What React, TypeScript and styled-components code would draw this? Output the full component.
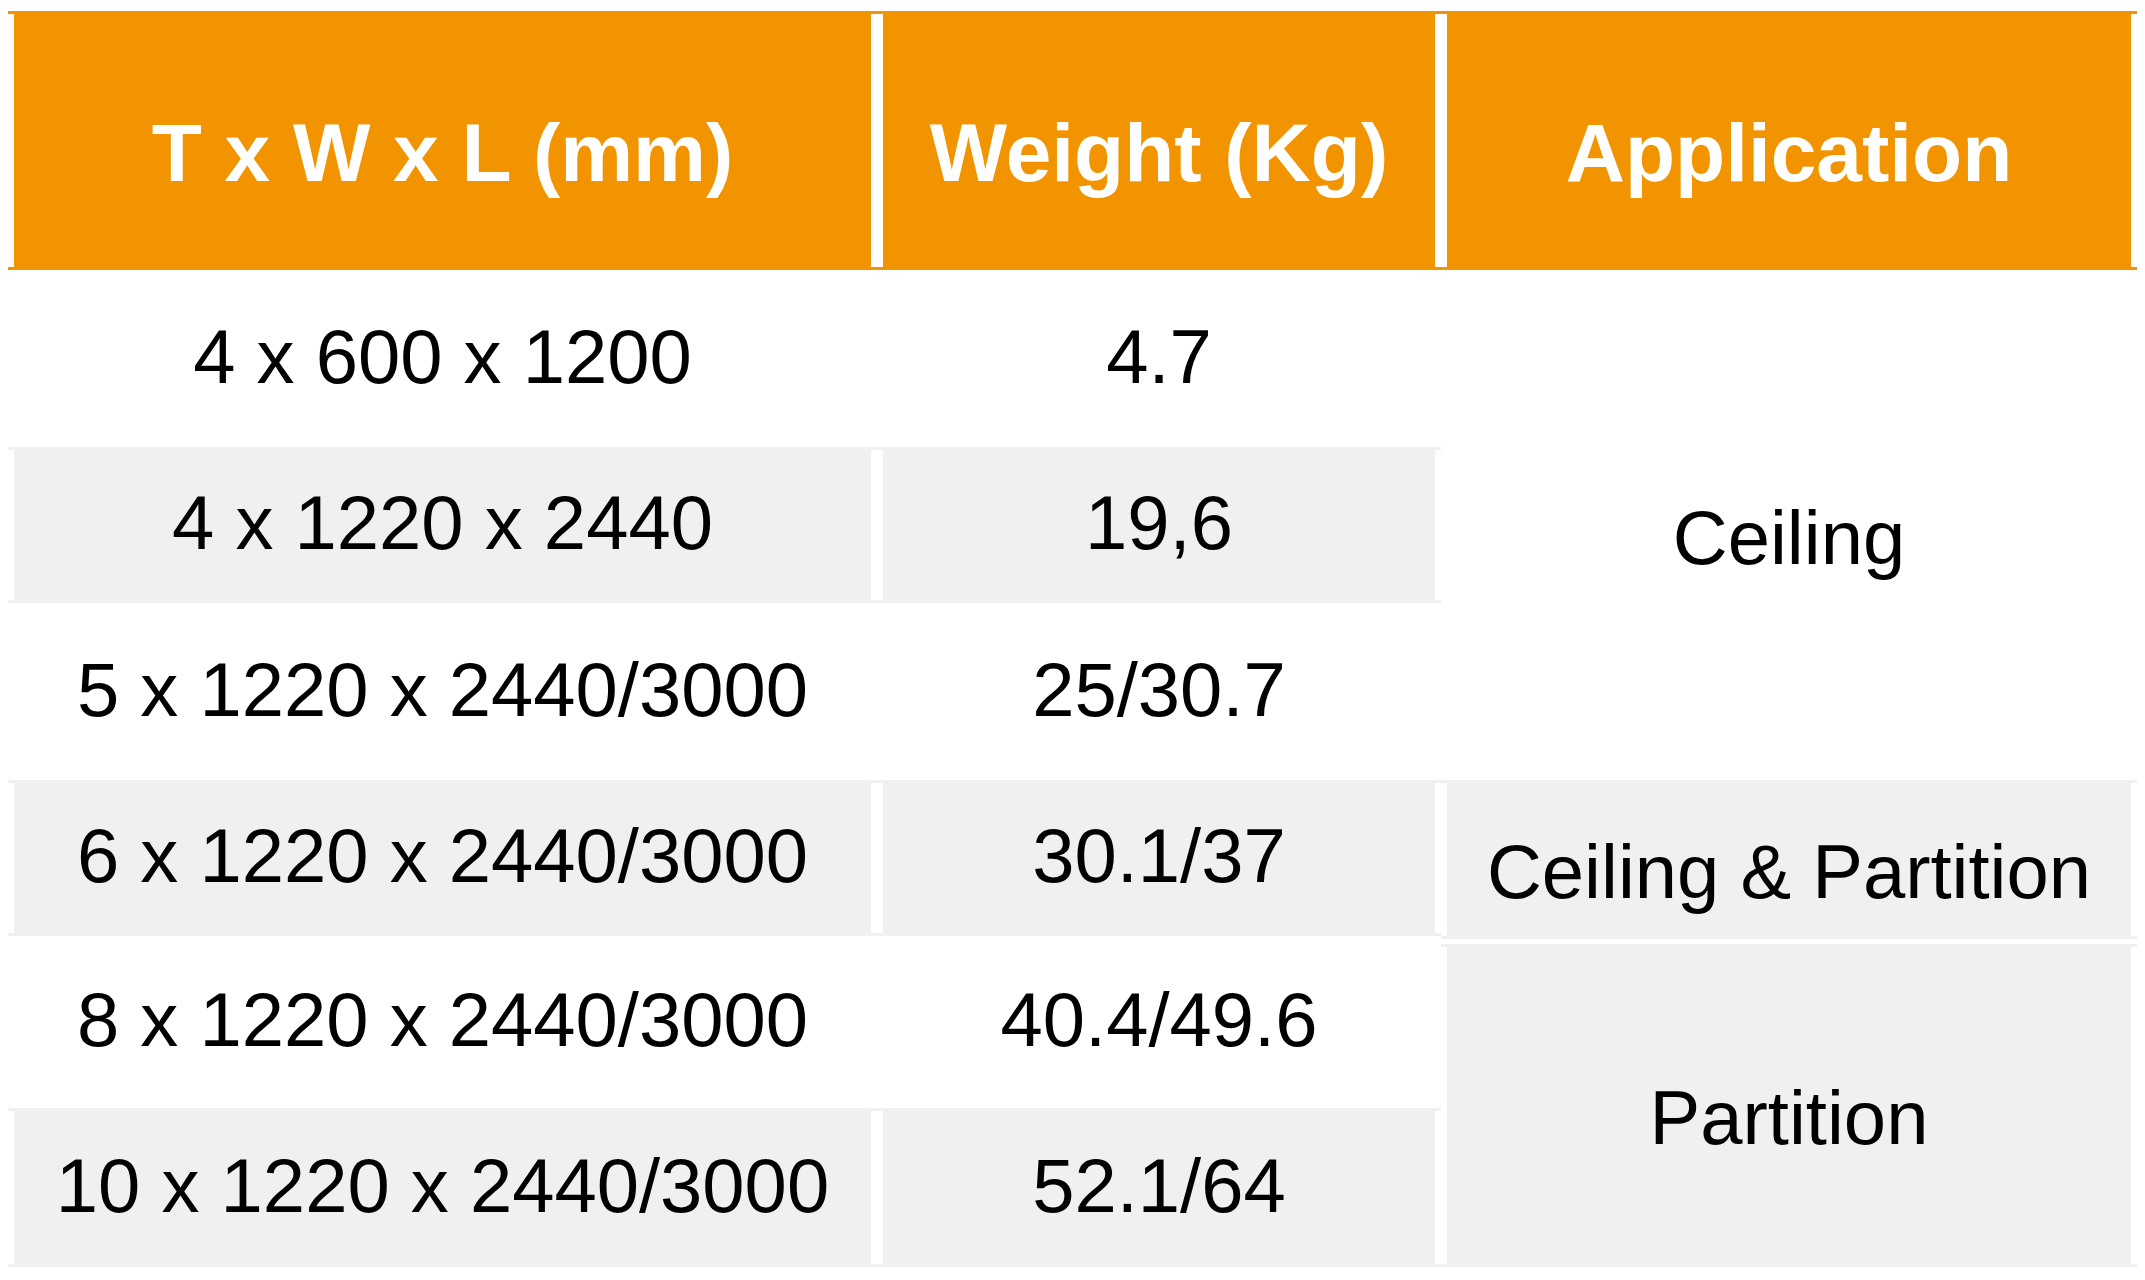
import styled, { createGlobalStyle } from "styled-components"

const GlobalStyle = createGlobalStyle`
    html, body {
        margin: 0;
        padding: 0;
        background: #ffffff;
    }
    body {
        font-family: "Liberation Sans", Arial, Helvetica, sans-serif;
    }
`

const ORANGE = "#f29400"
const GRAY = "#f0f0f0"

type Tone = "orange" | "gray" | "white"

const toneColor = (tone: Tone) =>
    tone === "orange" ? ORANGE : tone === "gray" ? GRAY : "#ffffff"

const Page = styled.div`
    padding: 11px 8px;
`

const Table = styled.div`
    display: grid;
    width: 2129px;
    grid-template-columns: 869px 564px 696px;
    grid-template-rows: 259px 177px 156px 177px 156px 172px 159px;
`

// outer box carries the 3px band at top and bottom, inner face gets the white separators
const Cell = styled.div<{ $tone: Tone; $col: number; $row: string; $mt?: number; $mb?: number }>`
    grid-column: ${(p) => p.$col};
    grid-row: ${(p) => p.$row};
    background: ${(p) => toneColor(p.$tone)};
    padding: 3px 0;
    margin-top: ${(p) => p.$mt ?? 0}px;
    margin-bottom: ${(p) => p.$mb ?? 0}px;
    display: flex;
`

const Face = styled.div<{ $shift?: number }>`
    flex: 1;
    display: flex;
    align-items: center;
    justify-content: center;
    border-left: 6px solid #ffffff;
    border-right: 6px solid #ffffff;
    padding-top: ${(p) => Math.max(p.$shift ?? 0, 0)}px;
    padding-bottom: ${(p) => Math.max(-(p.$shift ?? 0), 0)}px;
    box-sizing: border-box;
`

const HeadText = styled.span`
    color: #ffffff;
    font-weight: 700;
    font-size: 82px;
    white-space: nowrap;
`

const BodyText = styled.span`
    color: #000000;
    font-size: 76px;
    white-space: nowrap;
`

const headers = ["T x W x L (mm)", "Weight (Kg)", "Application"]

const rows = [
    { size: "4 x 600 x 1200", weight: "4.7" },
    { size: "4 x 1220 x 2440", weight: "19,6" },
    { size: "5 x 1220 x 2440/3000", weight: "25/30.7" },
    { size: "6 x 1220 x 2440/3000", weight: "30.1/37" },
    { size: "8 x 1220 x 2440/3000", weight: "40.4/49.6" },
    { size: "10 x 1220 x 2440/3000", weight: "52.1/64" },
]

const applications = [
    { text: "Ceiling", row: "2 / 5", tone: "white" as Tone },
    { text: "Ceiling & Partition", row: "5", tone: "gray" as Tone, mb: -3 },
    { text: "Partition", row: "6 / 8", tone: "gray" as Tone, mt: 8 },
]

export default function App() {
    return (
        <Page>
            <GlobalStyle />
            <Table>
                {headers.map((h, i) => (
                    <Cell key={h} $tone="orange" $col={i + 1} $row="1">
                        <Face $shift={24}>
                            <HeadText>{h}</HeadText>
                        </Face>
                    </Cell>
                ))}
                {rows.map((r, i) => {
                    const tone: Tone = i % 2 === 1 ? "gray" : "white"
                    return [
                        <Cell key={r.size} $tone={tone} $col={1} $row={`${i + 2}`}>
                            <Face $shift={-5}>
                                <BodyText>{r.size}</BodyText>
                            </Face>
                        </Cell>,
                        <Cell key={r.size + "-w"} $tone={tone} $col={2} $row={`${i + 2}`}>
                            <Face $shift={-5}>
                                <BodyText>{r.weight}</BodyText>
                            </Face>
                        </Cell>,
                    ]
                })}
                {applications.map((a) => (
                    <Cell key={a.text} $tone={a.tone} $col={3} $row={a.row} $mt={a.mt} $mb={a.mb}>
                        <Face $shift={24}>
                            <BodyText>{a.text}</BodyText>
                        </Face>
                    </Cell>
                ))}
            </Table>
        </Page>
    )
}
